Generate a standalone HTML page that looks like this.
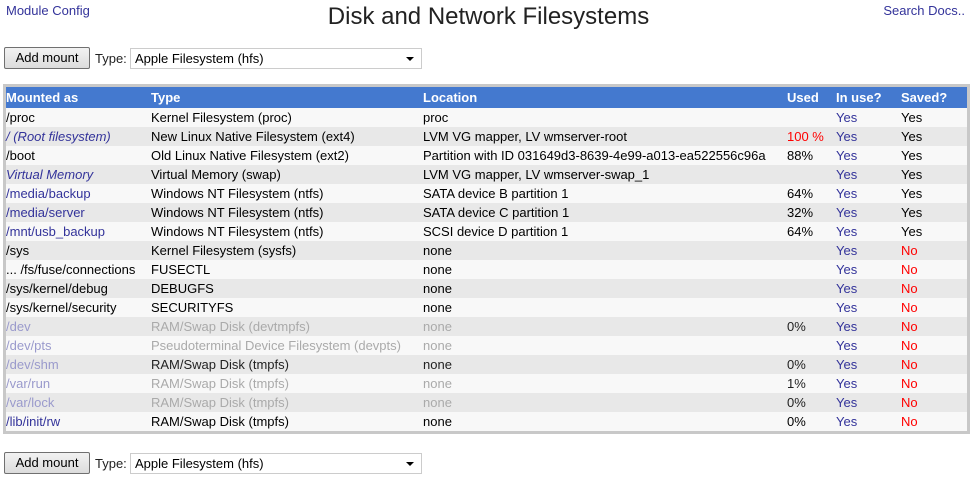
<!DOCTYPE html>
<html><head><meta charset="utf-8"><style>
body{margin:0;background:#fff;font-family:"Liberation Sans",Arial,sans-serif;font-size:13px;color:#000;width:977px;height:481px;overflow:hidden;position:relative}
a{color:#33339a;text-decoration:none}
.abs{position:absolute}
h1{position:absolute;left:0;width:977px;top:3px;margin:0;text-align:center;font-weight:normal;font-size:24px;color:#222}
.btn{position:absolute;left:4px;width:84px;height:20px;border:1px solid #707070;border-radius:2px;background:linear-gradient(#f2f2f2,#dcdcdc);font-size:13px;text-align:center;line-height:20px;color:#000}
.sel{position:absolute;left:130px;width:292px;border:1px solid #ccc;background:#fff;font-size:13px;line-height:19px;padding-left:4px;box-sizing:border-box;height:21px}
.sel:after{content:"";position:absolute;right:7px;top:8px;border-left:4px solid transparent;border-right:4px solid transparent;border-top:4px solid #000}
table{position:absolute;left:3px;top:84px;width:967px;border:3px solid #c8c8c8;border-collapse:collapse}
td,th{padding:0;height:19px;line-height:19px;white-space:nowrap;text-align:left;font-size:13px}
th{background:#4479cf;color:#fff;font-weight:bold;height:21px}
tr:nth-child(odd) td{background:#e8e8e8}
tr:nth-child(even) td{background:#f8f8f8}
.g td{color:#aaa}.g td a{color:#9a9acc}
.b{color:#33339a}.r{color:#f00}
</style></head><body>
<a class="abs" href="#" style="left:6px;top:3px">Module Config</a>
<a class="abs" href="#" style="right:12px;top:3px">Search Docs..</a>
<h1>Disk and Network Filesystems</h1>
<div class="btn" style="top:47px">Add mount</div><span class="abs" style="left:95px;top:51px;color:#222">Type:</span><div class="sel" style="top:48px">Apple Filesystem (hfs)</div>
<table>
<tr><th style="width:145px">Mounted as</th><th style="width:272px">Type</th><th style="width:364px">Location</th><th style="width:49px">Used</th><th style="width:65px">In use?</th><th>Saved?</th></tr>
<tr><td>/proc</td><td>Kernel Filesystem (proc)</td><td>proc</td><td></td><td class="b">Yes</td><td>Yes</td></tr>
<tr><td><a href="#"><i>/ (Root filesystem)</i></a></td><td>New Linux Native Filesystem (ext4)</td><td>LVM VG mapper, LV wmserver-root</td><td class="r">100 %</td><td class="b">Yes</td><td>Yes</td></tr>
<tr><td>/boot</td><td>Old Linux Native Filesystem (ext2)</td><td>Partition with ID 031649d3-8639-4e99-a013-ea522556c96a</td><td>88%</td><td class="b">Yes</td><td>Yes</td></tr>
<tr><td><a href="#"><i>Virtual Memory</i></a></td><td>Virtual Memory (swap)</td><td>LVM VG mapper, LV wmserver-swap_1</td><td></td><td class="b">Yes</td><td>Yes</td></tr>
<tr><td><a href="#">/media/backup</a></td><td>Windows NT Filesystem (ntfs)</td><td>SATA device B partition 1</td><td>64%</td><td class="b">Yes</td><td>Yes</td></tr>
<tr><td><a href="#">/media/server</a></td><td>Windows NT Filesystem (ntfs)</td><td>SATA device C partition 1</td><td>32%</td><td class="b">Yes</td><td>Yes</td></tr>
<tr><td><a href="#">/mnt/usb_backup</a></td><td>Windows NT Filesystem (ntfs)</td><td>SCSI device D partition 1</td><td>64%</td><td class="b">Yes</td><td>Yes</td></tr>
<tr><td>/sys</td><td>Kernel Filesystem (sysfs)</td><td>none</td><td></td><td class="b">Yes</td><td class="r">No</td></tr>
<tr><td>... /fs/fuse/connections</td><td>FUSECTL</td><td>none</td><td></td><td class="b">Yes</td><td class="r">No</td></tr>
<tr><td>/sys/kernel/debug</td><td>DEBUGFS</td><td>none</td><td></td><td class="b">Yes</td><td class="r">No</td></tr>
<tr><td>/sys/kernel/security</td><td>SECURITYFS</td><td>none</td><td></td><td class="b">Yes</td><td class="r">No</td></tr>
<tr class="g"><td><a href="#">/dev</a></td><td>RAM/Swap Disk (devtmpfs)</td><td>none</td><td style="color:#222">0%</td><td style="color:#33339a">Yes</td><td style="color:#f00">No</td></tr>
<tr class="g"><td><a href="#">/dev/pts</a></td><td>Pseudoterminal Device Filesystem (devpts)</td><td>none</td><td></td><td style="color:#33339a">Yes</td><td style="color:#f00">No</td></tr>
<tr class="g"><td><a href="#">/dev/shm</a></td><td style="color:#222">RAM/Swap Disk (tmpfs)</td><td style="color:#222">none</td><td style="color:#222">0%</td><td style="color:#33339a">Yes</td><td style="color:#f00">No</td></tr>
<tr class="g"><td><a href="#">/var/run</a></td><td>RAM/Swap Disk (tmpfs)</td><td>none</td><td style="color:#222">1%</td><td style="color:#33339a">Yes</td><td style="color:#f00">No</td></tr>
<tr class="g"><td><a href="#">/var/lock</a></td><td>RAM/Swap Disk (tmpfs)</td><td>none</td><td style="color:#222">0%</td><td style="color:#33339a">Yes</td><td style="color:#f00">No</td></tr>
<tr><td><a href="#">/lib/init/rw</a></td><td>RAM/Swap Disk (tmpfs)</td><td>none</td><td>0%</td><td class="b">Yes</td><td class="r">No</td></tr>
</table>
<div class="btn" style="top:452px">Add mount</div><span class="abs" style="left:95px;top:456px;color:#222">Type:</span><div class="sel" style="top:453px">Apple Filesystem (hfs)</div>
</body></html>
